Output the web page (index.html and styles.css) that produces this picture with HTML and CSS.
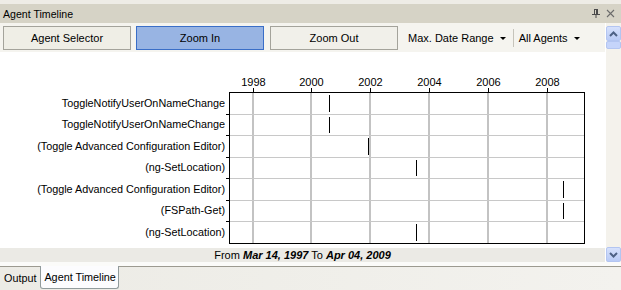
FILE: index.html
```html
<!DOCTYPE html>
<html>
<head>
<meta charset="utf-8">
<link rel="stylesheet" href="styles.css">
</head>
<body>
<div class="window">
  <div class="titlebar">
    <span class="title">Agent Timeline</span>
    <span class="title-icons">
      <svg class="pin" width="8" height="9" viewBox="0 0 8 9"><path d="M2 0.5H6M2.5 0.5V5.5M5.5 0.5V5.5M4.5 0.5V5.5M0 5.5H8M4 5.5V9" stroke="#4b4b4b" stroke-width="1" fill="none"/></svg>
      <svg class="close" width="9" height="9" viewBox="0 0 9 9"><path d="M1 1L8 8M8 1L1 8" stroke="#6b6b6b" stroke-width="1.1" fill="none"/></svg>
    </span>
  </div>
  <div class="body">
    <div class="main">
      <div class="toolbar">
        <div class="btn">Agent Selector</div>
        <div class="btn active">Zoom In</div>
        <div class="btn">Zoom Out</div>
        <div class="dropdown dd-range">Max. Date Range <span class="caret"></span></div>
        <div class="sep"></div>
        <div class="dropdown">All Agents <span class="caret"></span></div>
      </div>
      <div class="chart">
        <div class="labels">
          <div class="lbl r22">ToggleNotifyUserOnNameChange</div>
          <div class="lbl r21">ToggleNotifyUserOnNameChange</div>
          <div class="lbl r22">(Toggle Advanced Configuration Editor)</div>
          <div class="lbl r21">(ng-SetLocation)</div>
          <div class="lbl r22">(Toggle Advanced Configuration Editor)</div>
          <div class="lbl r21">(FSPath-Get)</div>
          <div class="lbl r22">(ng-SetLocation)</div>
        </div>
        <svg class="plot" width="370" height="196" viewBox="0 0 370 196">
          <g fill="#c3c3c3">
            <rect x="26" y="41" width="2" height="150"/>
            <rect x="84" y="41" width="2" height="150"/>
            <rect x="143" y="41" width="2" height="150"/>
            <rect x="202" y="41" width="2" height="150"/>
            <rect x="261" y="41" width="2" height="150"/>
            <rect x="320" y="41" width="2" height="150"/>
          </g>
          <g stroke="#c8c8c8" stroke-width="1">
            <line x1="4" y1="62.5" x2="358" y2="62.5"/>
            <line x1="4" y1="83.5" x2="358" y2="83.5"/>
            <line x1="4" y1="105.5" x2="358" y2="105.5"/>
            <line x1="4" y1="126.5" x2="358" y2="126.5"/>
            <line x1="4" y1="148.5" x2="358" y2="148.5"/>
            <line x1="4" y1="169.5" x2="358" y2="169.5"/>
          </g>
          <g stroke="#000" stroke-width="1">
            <rect x="3.5" y="40.5" width="355" height="151" fill="none"/>
            <line x1="0" y1="62.5" x2="3" y2="62.5"/>
            <line x1="0" y1="83.5" x2="3" y2="83.5"/>
            <line x1="0" y1="105.5" x2="3" y2="105.5"/>
            <line x1="0" y1="126.5" x2="3" y2="126.5"/>
            <line x1="0" y1="148.5" x2="3" y2="148.5"/>
            <line x1="0" y1="169.5" x2="3" y2="169.5"/>
            <line x1="27.5" y1="36" x2="27.5" y2="40"/>
            <line x1="85.5" y1="36" x2="85.5" y2="40"/>
            <line x1="144.5" y1="36" x2="144.5" y2="40"/>
            <line x1="203.5" y1="36" x2="203.5" y2="40"/>
            <line x1="262.5" y1="36" x2="262.5" y2="40"/>
            <line x1="321.5" y1="36" x2="321.5" y2="40"/>
            <line x1="103.5" y1="43" x2="103.5" y2="60"/>
            <line x1="103.5" y1="65" x2="103.5" y2="81"/>
            <line x1="142.5" y1="86" x2="142.5" y2="103"/>
            <line x1="190.5" y1="108" x2="190.5" y2="124"/>
            <line x1="337.5" y1="129" x2="337.5" y2="146"/>
            <line x1="337.5" y1="151" x2="337.5" y2="167"/>
            <line x1="190.5" y1="172" x2="190.5" y2="189"/>
          </g>
          <g class="years" text-anchor="middle">
            <text x="27.5" y="34">1998</text>
            <text x="85.5" y="34">2000</text>
            <text x="144.5" y="34">2002</text>
            <text x="203.5" y="34">2004</text>
            <text x="262.5" y="34">2006</text>
            <text x="321.5" y="34">2008</text>
          </g>
        </svg>
      </div>
      <div class="footer">From <b>Mar 14, 1997</b> To <b>Apr 04, 2009</b></div>
    </div>
    <div class="scrollbar">
      <div class="sbtn">
        <svg width="9" height="6" viewBox="0 0 9 6"><path d="M1 5L4.5 1.5L8 5" stroke="#4d6185" stroke-width="2" fill="none"/></svg>
      </div>
      <div class="thumb"></div>
      <div class="track"></div>
      <div class="sbtn">
        <svg width="9" height="6" viewBox="0 0 9 6"><path d="M1 1L4.5 4.5L8 1" stroke="#4d6185" stroke-width="2" fill="none"/></svg>
      </div>
    </div>
  </div>
  <div class="spacer"></div>
  <div class="tabs">
    <div class="tab">Output</div>
    <div class="tab selected">Agent Timeline</div>
  </div>
</div>
</body>
</html>
```

FILE: styles.css
```css
html, body {
  margin: 0;
  padding: 0;
}
body {
  width: 621px;
  height: 290px;
  overflow: hidden;
  font-family: "Liberation Sans", Arial, sans-serif;
  font-size: 11px;
  color: #000;
  background: #f1efe8;
}
.window {
  display: flex;
  flex-direction: column;
  width: 621px;
  height: 290px;
}
.titlebar {
  height: 19px;
  border-top: 4px solid #eeece6;
  background: #d6d3c6;
  display: flex;
  align-items: center;
  justify-content: space-between;
  padding: 0 6px 0 3px;
}
.title {
  font-size: 10.6px;
  color: #000;
}
.title-icons {
  display: flex;
  align-items: center;
  gap: 6px;
}
.body {
  display: flex;
  height: 239px;
}
.main {
  flex: 1;
  display: flex;
  flex-direction: column;
  background: #fff;
}
.toolbar {
  height: 29px;
  box-sizing: border-box;
  padding: 3px 0 0 3px;
  background: #f5f4ef;
  display: flex;
  align-items: flex-start;
}
.btn {
  width: 126px;
  height: 22px;
  border: 1px solid #a4a39b;
  background: #efeee6;
  display: flex;
  align-items: center;
  justify-content: center;
  font-size: 11px;
  margin-right: 5px;
}
.btn.active {
  background: #98b4e3;
  border-color: #3a6ec7;
  margin-right: 5px;
}
.btn + .btn.active + .btn {
  margin-left: 1px;
  background: #f1f0ea;
}
.dropdown {
  height: 24px;
  display: flex;
  align-items: center;
  font-size: 11px;
  white-space: pre;
}
.dd-range {
  margin-left: 5px;
}
.caret {
  display: inline-block;
  width: 0;
  height: 0;
  border-left: 3px solid transparent;
  border-right: 3px solid transparent;
  border-top: 3px solid #000;
  margin-left: 3px;
  margin-top: 1px;
}
.sep {
  width: 1px;
  height: 18px;
  background: #c6c4bb;
  margin: 3px 5px 0 7px;
}
.chart {
  height: 196px;
  display: flex;
  background: #fff;
}
.labels {
  width: 225px;
  padding-top: 40px;
  padding-right: 1px;
  text-align: right;
  font-size: 10.8px;
  white-space: nowrap;
}
.lbl.r22 {
  height: 22px;
  line-height: 22px;
}
.lbl.r21 {
  height: 21px;
  line-height: 21px;
}
.plot {
  display: block;
}
.years text {
  font-family: "Liberation Sans", Arial, sans-serif;
  font-size: 11px;
  fill: #000;
}
.footer {
  height: 14px;
  line-height: 15px;
  background: #ebeae5;
  text-align: center;
  font-size: 11px;
}
.footer b {
  font-style: italic;
  font-weight: bold;
}
.scrollbar {
  width: 16px;
  border-left: 1px solid #ffffff;
  background: #f4f2ec;
  display: flex;
  flex-direction: column;
  align-items: center;
  padding-top: 3px;
  box-sizing: border-box;
}
.sbtn {
  width: 13px;
  height: 13px;
  border: 1px solid #b3c5f1;
  border-radius: 2px;
  background: linear-gradient(#d6e1fc, #b9cbf6);
  display: flex;
  align-items: center;
  justify-content: center;
}
.thumb {
  width: 13px;
  height: 6px;
  border: 1px solid #b3c5f1;
  border-radius: 2px;
  background: #c5d4fa;
}
.track {
  flex: 1;
}
.spacer {
  height: 4px;
  background: #fbfbf9;
  border-bottom: 1px solid #9c9a90;
}
.tabs {
  flex: 1;
  display: flex;
  align-items: flex-start;
  padding-left: 2px;
  background: linear-gradient(90deg, #ecebe5, #f3f2ee);
}
.tab {
  height: 21px;
  line-height: 21px;
  padding: 0 3px 0 2px;
  font-size: 10.8px;
  margin-top: 1px;
}
.tab.selected {
  margin-top: -1px;
  height: 22px;
  line-height: 22px;
  background: #fcfcfe;
  border: 1px solid #919b9c;
  border-top: none;
  border-radius: 0 0 3px 3px;
  padding: 0 2px 0 3px;
  margin-left: 1px;
}
```
